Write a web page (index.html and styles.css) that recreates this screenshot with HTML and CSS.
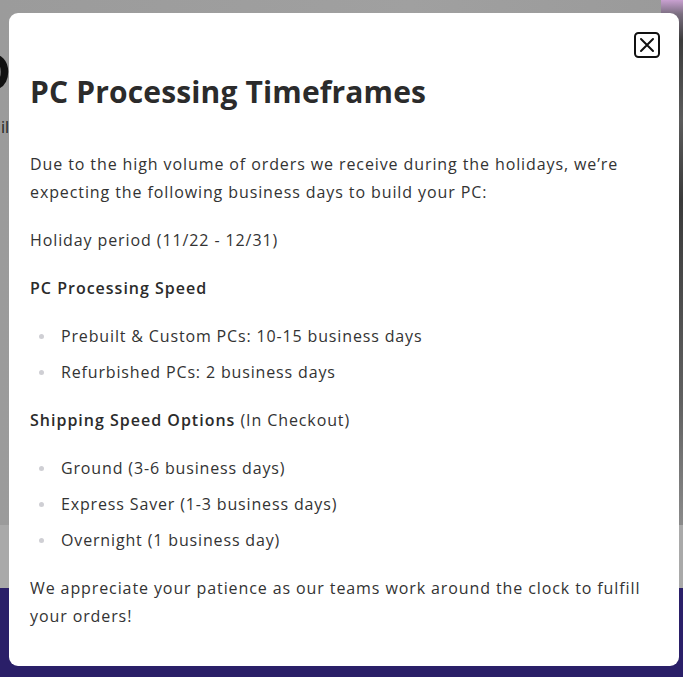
FILE: index.html
```html
<!DOCTYPE html>
<html lang="en">
<head>
<meta charset="utf-8">
<title>PC Processing Timeframes</title>
<link rel="stylesheet" href="styles.css">
</head>
<body>
<div class="backdrop">
  <div class="band band-top">
    <div class="bg-text">
      <div class="bg-big">O</div>
      <div class="bg-small">il</div>
    </div>
    <div class="bg-right"></div>
  </div>
  <div class="band band-mid"></div>
  <div class="band band-bottom"></div>
</div>

<div class="modal" role="dialog" aria-labelledby="modal-title">
  <button class="close" aria-label="Close">
    <svg width="26" height="26" viewBox="0 0 26 26" aria-hidden="true">
      <rect x="1" y="1" width="24" height="24" rx="3.5" fill="none" stroke="#111" stroke-width="2"/>
      <path d="M7 7 L19 19 M19 7 L7 19" stroke="#111" stroke-width="2" stroke-linecap="round"/>
    </svg>
  </button>
  <h2 id="modal-title" class="title">PC Processing Timeframes</h2>
  <p class="text">Due to the high volume of orders we receive during the holidays, we’re expecting the following business days to build your PC:</p>
  <p class="text">Holiday period (11/22 - 12/31)</p>
  <p class="text"><strong>PC Processing Speed</strong></p>
  <ul class="list">
    <li>Prebuilt &amp; Custom PCs: 10-15 business days</li>
    <li>Refurbished PCs: 2 business days</li>
  </ul>
  <p class="text"><strong>Shipping Speed Options</strong> (In Checkout)</p>
  <ul class="list">
    <li>Ground (3-6 business days)</li>
    <li>Express Saver (1-3 business days)</li>
    <li>Overnight (1 business day)</li>
  </ul>
  <p class="text">We appreciate your patience as our teams work around the clock to fulfill your orders!</p>
</div>
</body>
</html>
```

FILE: styles.css
```css
* { box-sizing: border-box; }

html, body {
  margin: 0;
  height: 100%;
  overflow: hidden;
}

body {
  font-family: "Open Sans", "Liberation Sans", sans-serif;
  color: #333;
  background: #9c9c9c;
}

.backdrop {
  display: flex;
  flex-direction: column;
  height: 100%;
}

.band-top {
  height: 525px;
  background: linear-gradient(90deg, #9b9b9b 0%, #a0a0a0 60%, #9a9a9a 100%);
  display: flex;
  justify-content: space-between;
}

.bg-text {
  width: 9px;
  overflow: hidden;
  padding-top: 44px;
  color: #111;
}

.bg-big {
  margin-left: -30px;
  font-family: "Liberation Sans", sans-serif;
  font-weight: 700;
  font-size: 52px;
  line-height: 56px;
}

.bg-small {
  margin-top: 16px;
  padding-left: 1px;
  font-size: 16px;
  color: #222;
}

.bg-right {
  width: 22px;
  background: linear-gradient(180deg, #c8a0d0 0px, #7a6e80 14px, #3c3c3c 40px, #5c5c5c 120px, #3a3a3a 200px, #606060 400px, #8a8a8a 525px);
}

.band-mid {
  height: 63px;
  background: #a9a9a9;
}

.band-bottom {
  flex: 1;
  background: #2a1f68;
}

.modal {
  position: fixed;
  left: 9px;
  top: 13px;
  width: 670px;
  height: 653px;
  background: #fff;
  border-radius: 9px;
  padding: 61px 21px 0 21px;
}

.close {
  position: absolute;
  top: 19px;
  right: 19px;
  width: 26px;
  height: 26px;
  padding: 0;
  border: 0;
  background: none;
  cursor: pointer;
  display: flex;
}

.title {
  margin: 0 0 40px;
  font-size: 30px;
  line-height: 36px;
  font-weight: 700;
  color: #2b2b2b;
  letter-spacing: 0.15px;
}

.text {
  margin: 0 0 20px;
  font-size: 16px;
  line-height: 28px;
  letter-spacing: 0.9px;
}

.text strong {
  font-weight: 600;
  letter-spacing: 1px;
  color: #2b2b2b;
}

.list {
  list-style: none;
  margin: 0 0 20px;
  padding: 0;
  display: flex;
  flex-direction: column;
  gap: 8px;
}

.list li {
  position: relative;
  padding-left: 31px;
  font-size: 16px;
  line-height: 28px;
  letter-spacing: 0.85px;
}

.list li::before {
  content: "";
  position: absolute;
  left: 9px;
  top: 12px;
  width: 5px;
  height: 5px;
  border-radius: 50%;
  background: #cfcfd4;
}
```
